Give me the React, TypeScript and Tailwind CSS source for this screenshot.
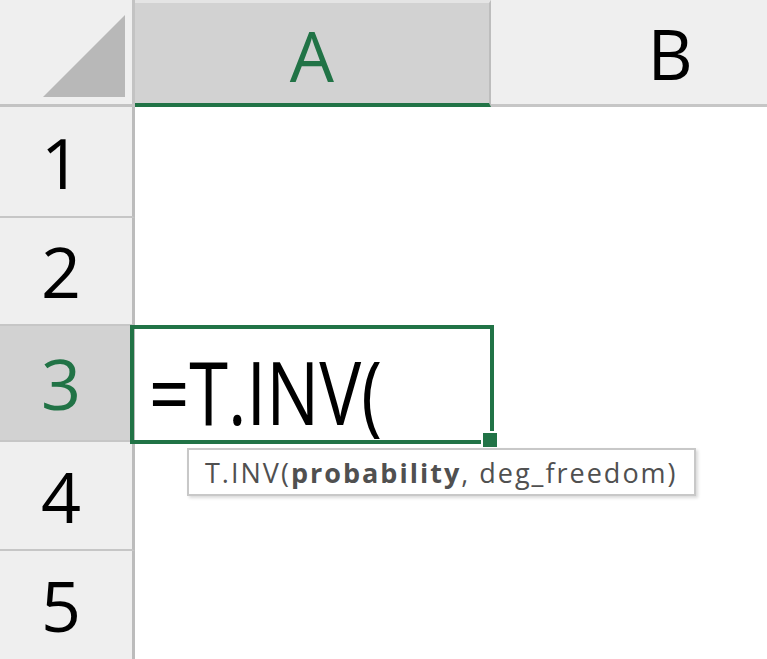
import React from "react";

const hdr = "font-['Open_Sans','Noto_Sans',sans-serif] text-[70px] leading-none";

export default function App() {
  return (
    <div className="relative w-[767px] h-[659px] overflow-hidden bg-white">
      <div className="grid grid-cols-[135px_356px_1fr] grid-rows-[107px_111px_108px_116px_109px_108px] w-full h-full">
        {/* corner */}
        <div className="relative bg-[#efefef] border-r-[3px] border-b-[3px] border-[#c3c3c3]">
          <svg className="absolute left-0 top-0" width="132" height="104" viewBox="0 0 132 104">
            <polygon points="43,97 125,97 125,15" fill="#b8b8b8" />
          </svg>
        </div>
        {/* A header */}
        <div className="flex items-center justify-center bg-[#d2d2d2] border-t-[3px] border-t-[#e4e4e4] border-r-2 border-r-[#bdbdbd] border-b-4 border-b-[#217346] pt-[4px]">
          <span className={`${hdr} text-[#217346]`}>A</span>
        </div>
        {/* B header */}
        <div className="flex items-center justify-center bg-[#efefef] border-b-[3px] border-b-[#c6c6c6] pt-[2px]">
          <span className={`${hdr} text-black pl-[82px]`}>B</span>
        </div>

        {/* row 1 */}
        <div className="flex items-center justify-center bg-[#efefef] border-r-[3px] border-r-[#bcbcbc] border-b-2 border-b-[#c6c6c6] pr-[10px]">
          <span className={`${hdr} text-black`}>1</span>
        </div>
        <div className="bg-white" />
        <div className="bg-white" />

        {/* row 2 */}
        <div className="flex items-center justify-center bg-[#efefef] border-r-[3px] border-r-[#bcbcbc] border-b-2 border-b-[#c6c6c6] pr-[10px]">
          <span className={`${hdr} text-black`}>2</span>
        </div>
        <div className="bg-white" />
        <div className="bg-white" />

        {/* row 3 */}
        <div className="flex items-center justify-center bg-[#d2d2d2] border-r-[3px] border-r-[#bcbcbc] border-b-2 border-b-[#c6c6c6] pr-[10px]">
          <span className={`${hdr} text-[#217346]`}>3</span>
        </div>
        <div className="flex items-center bg-white pl-[14px] pt-[14px]">
          <span className="font-['Open_Sans','Noto_Sans',sans-serif] text-[88px] leading-none text-black origin-left scale-x-[0.8] whitespace-nowrap">
            =T.INV(
          </span>
        </div>
        <div className="bg-white" />

        {/* row 4 */}
        <div className="flex items-center justify-center bg-[#efefef] border-r-[3px] border-r-[#bcbcbc] border-b-2 border-b-[#c6c6c6] pr-[10px]">
          <span className={`${hdr} text-black`}>4</span>
        </div>
        <div className="bg-white" />
        <div className="bg-white" />

        {/* row 5 */}
        <div className="flex items-center justify-center bg-[#efefef] border-r-[3px] border-r-[#bcbcbc] pr-[10px]">
          <span className={`${hdr} text-black`}>5</span>
        </div>
        <div className="bg-white" />
        <div className="bg-white" />
      </div>

      {/* selection border */}
      <div className="absolute left-[130px] top-[325px] w-[364px] h-[119px] border-4 border-[#217346]" />
      {/* fill handle */}
      <div className="absolute left-[481px] top-[431px] w-[18px] h-[18px] bg-[#217346] border-2 border-white" />

      {/* tooltip */}
      <div className="absolute left-[187px] top-[448px] w-[509px] h-[48px] bg-white border-2 border-[#c8c8c8] shadow-[2px_2px_3px_rgba(0,0,0,0.15)] flex items-center pl-[16px]">
        <span className="font-['Open_Sans','Noto_Sans',sans-serif] text-[27px] tracking-[2px] leading-none text-[#505050] whitespace-nowrap">
          T.INV(<span className="font-bold">probability</span>, deg_freedom)
        </span>
      </div>
    </div>
  );
}
